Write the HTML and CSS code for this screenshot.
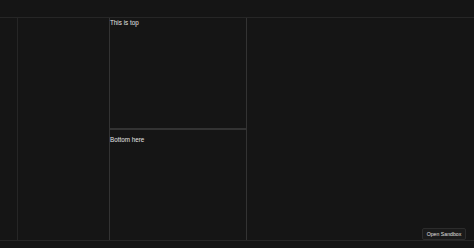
FILE: index.html
```html
<!DOCTYPE html>
<html>
<head>
<meta charset="utf-8">
<link rel="stylesheet" href="styles.css">
</head>
<body>
<div class="app">
  <div class="topbar"></div>
  <div class="main">
    <div class="rail"></div>
    <div class="gap"></div>
    <div class="panel">
      <div class="pane top">This is top</div>
      <div class="pane bottom">Bottom here</div>
    </div>
    <div class="rest"></div>
  </div>
  <div class="footer"></div>
  <button class="sandbox">Open Sandbox</button>
</div>
</body>
</html>
```
FILE: styles.css
```css
html, body {
  margin: 0;
  padding: 0;
  background: #151515;
}
.app {
  position: relative;
  width: 474px;
  height: 248px;
  display: flex;
  flex-direction: column;
  font-family: "Liberation Sans", Arial, sans-serif;
  color: #e4e4e4;
  overflow: hidden;
}
.topbar {
  height: 17px;
  flex: none;
  border-bottom: 1px solid #262626;
}
.main {
  flex: 1;
  display: flex;
  min-height: 0;
}
.rail {
  width: 17px;
  flex: none;
  border-right: 1px solid #262626;
}
.gap {
  width: 91px;
  flex: none;
}
.panel {
  width: 136px;
  flex: none;
  border-left: 1px solid #333;
  border-right: 1px solid #333;
  display: flex;
  flex-direction: column;
}
.pane {
  box-sizing: border-box;
  font-size: 6.3px;
  line-height: 8px;
  padding: 1px 0 0 0;
}
.pane.top {
  flex: none;
  height: 112px;
  border-bottom: 2px solid #333;
}
.pane.bottom {
  flex: 1;
  padding-top: 6px;
}
.rest {
  flex: 1;
}
.footer {
  height: 7px;
  flex: none;
  border-top: 1px solid #262626;
}
.sandbox {
  position: absolute;
  left: 422px;
  top: 228px;
  width: 44px;
  height: 12px;
  padding: 0;
  margin: 0;
  background: #1a1a1a;
  border: 1px solid #2c2c2c;
  border-radius: 2px;
  color: #e0e0e0;
  font-family: "Liberation Sans", Arial, sans-serif;
  font-size: 5.2px;
  line-height: 10px;
}
```
